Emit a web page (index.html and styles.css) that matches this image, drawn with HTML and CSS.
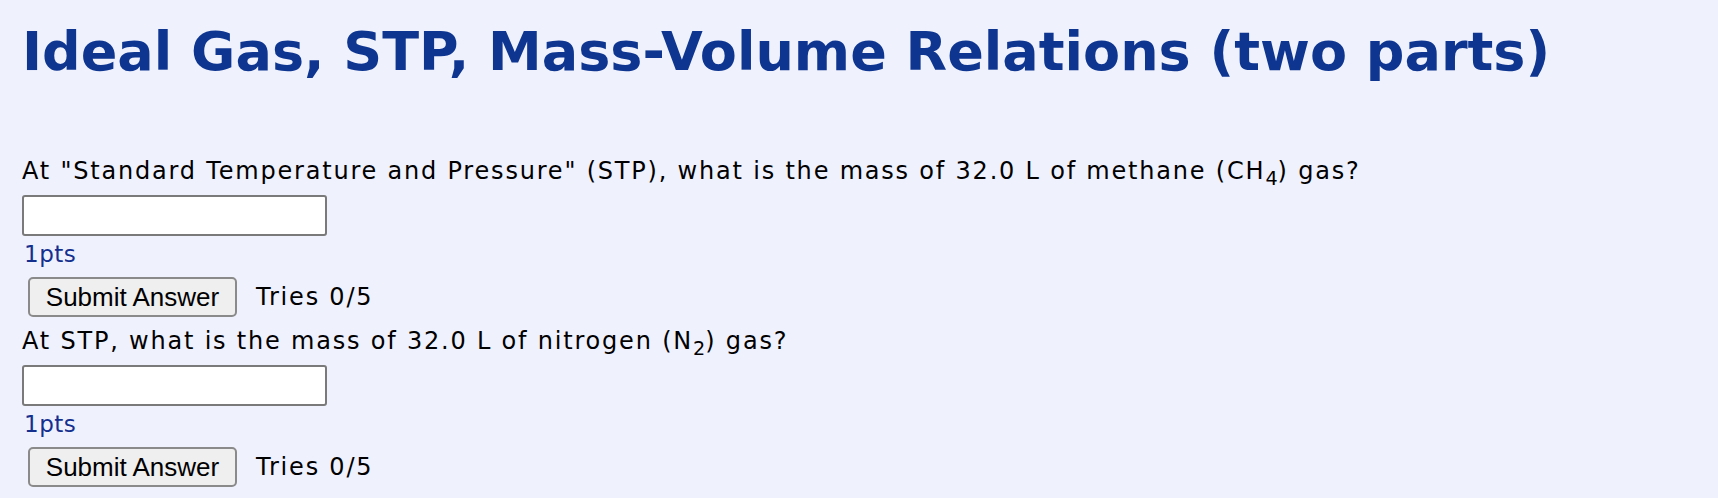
FILE: index.html
```html
<!DOCTYPE html>
<html>
<head>
<meta charset="utf-8">
<link rel="stylesheet" href="styles.css">
</head>
<body>
<div class="page">
  <h1 class="title">Ideal Gas, STP, Mass-Volume Relations (two parts)</h1>
  <div class="part first">
    <p class="q">At "Standard Temperature and Pressure" (STP), what is the mass of 32.0 L of methane (CH<sub>4</sub>) gas?</p>
    <input class="answer" type="text">
    <div class="pts">1pts</div>
    <div class="actions"><button class="submit">Submit Answer</button><span class="tries">Tries 0/5</span></div>
  </div>
  <div class="part">
    <p class="q">At STP, what is the mass of 32.0 L of nitrogen (N<sub>2</sub>) gas?</p>
    <input class="answer" type="text">
    <div class="pts">1pts</div>
    <div class="actions"><button class="submit">Submit Answer</button><span class="tries">Tries 0/5</span></div>
  </div>
</div>
</body>
</html>
```
FILE: styles.css
```css
html, body {
  margin: 0;
  padding: 0;
  background: #eff1fd;
}
.page {
  padding: 20px 22px 0 22px;
  font-family: "DejaVu Sans", Verdana, sans-serif;
  color: #000;
}
.title {
  margin: 0;
  font-family: "DejaVu Sans", Verdana, sans-serif;
  font-weight: bold;
  font-size: 54px;
  line-height: 64px;
  color: #0e3691;
}
.part.first {
  margin-top: 73px;
}
.part {
  margin-top: 10px;
}
.q {
  margin: 0;
  font-size: 24px;
  line-height: 28px;
  letter-spacing: 1.8px;
}
.q sub {
  font-size: 0.8em;
  line-height: 0;
  vertical-align: -0.3em;
  letter-spacing: 0;
}
.answer {
  display: block;
  box-sizing: border-box;
  width: 305px;
  height: 41px;
  margin: 10px 0 0 0;
  border: 2px solid #7a7a7a;
  border-radius: 3px;
  background: #fff;
}
.pts {
  margin-top: 4px;
  padding-left: 2px;
  font-size: 23px;
  line-height: 28px;
  letter-spacing: 0.5px;
  color: #14308f;
}
.actions {
  margin-top: 9px;
  display: flex;
  align-items: center;
}
.submit {
  box-sizing: border-box;
  width: 209px;
  height: 40px;
  margin: 0 19px 0 6px;
  padding: 0;
  font-family: "Liberation Sans", Arial, sans-serif;
  font-size: 26px;
  color: #000;
  background: #efefef;
  border: 2px solid #8a8a8a;
  border-radius: 5px;
}
.tries {
  font-size: 24px;
  letter-spacing: 1.8px;
}
```
